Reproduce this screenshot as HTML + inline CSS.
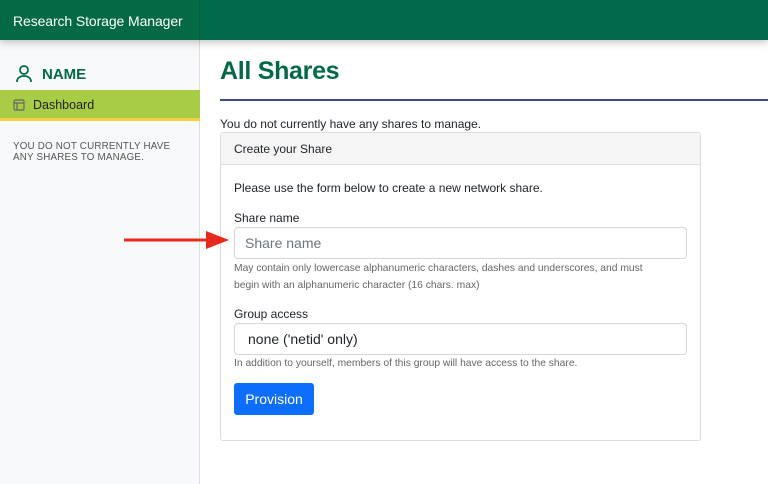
<!DOCTYPE html>
<html><head><meta charset="utf-8"><style>
*{box-sizing:border-box;margin:0;padding:0}
body{width:768px;height:484px;overflow:hidden;font-family:"Liberation Sans",sans-serif;background:#fff;position:relative;color:#212529}
.top{position:absolute;left:0;top:0;width:768px;height:40px;background:#00694a;box-shadow:0 2px 8px rgba(0,0,0,.25);z-index:2}
.top .brand{position:absolute;left:0;top:0;width:200px;height:40px;background:#046a46;border-right:1px solid #0b5a3d;color:#fff;font-size:14px;line-height:42px;padding-left:13px;letter-spacing:-.1px}
.side{position:absolute;left:0;top:40px;width:200px;height:444px;background:#f8f9fa;border-right:1px solid #dcdee2}
.name{position:absolute;left:14px;top:24px;color:#046a46;font-weight:bold;font-size:15px;display:flex;align-items:center}
.dash{position:absolute;left:0;top:50px;width:200px;height:31px;background:#a8cc45;border-bottom:3px solid #f4d03f;font-size:12.5px;color:#222;line-height:31px;padding-left:33px}
.dash svg{position:absolute;left:13px;top:9px}
.stext{position:absolute;left:13px;top:101px;font-size:9.8px;color:#555;line-height:11px;letter-spacing:.2px}
h1{position:absolute;left:220px;top:57px;font-size:25px;color:#046a46;font-weight:bold;letter-spacing:-.3px}
.hr{position:absolute;left:220px;top:99px;width:548px;height:2px;background:#3d4a8a}
.p{position:absolute;left:220px;top:117px;font-size:12px}
.card{position:absolute;left:220px;top:132px;width:481px;height:309px;border:1px solid #dcdcdc;border-radius:3px}
.ch{height:32px;background:#f5f5f5;border-bottom:1px solid #e0e0e0;font-size:12px;line-height:32px;padding-left:13px}
.t{position:absolute;left:13px;font-size:12px}
.in{position:absolute;left:13px;width:453px;height:32px;border:1px solid #d3d6da;border-radius:4px;font-size:14px;line-height:30px}
.h{position:absolute;left:13px;font-size:10.3px;color:#666;line-height:17px}
.btn{position:absolute;left:13px;top:250px;width:80px;height:32px;background:#0d6efd;border-radius:3px;color:#fff;font-size:14px;line-height:32px;text-align:center}
</style></head><body>
<div class="top"><div class="brand">Research Storage Manager</div></div>
<div class="side">
<div class="name"><svg width="20" height="20" viewBox="0 0 20 20" fill="none" stroke="#046a46" stroke-width="1.8"><circle cx="10" cy="6" r="4"/><path d="M3 18c0-4 3-6 7-6s7 2 7 6"/></svg><span style="margin-left:8px">NAME</span></div>
<div class="dash"><svg width="12" height="12" viewBox="0 0 12 12" fill="none" stroke="#666" stroke-width="1.2"><rect x="1" y="1" width="10" height="10" rx="1.5"/><path d="M1 4h10M4 4v7"/></svg>Dashboard</div>
<div class="stext">YOU DO NOT CURRENTLY HAVE<br>ANY SHARES TO MANAGE.</div>
</div>
<h1>All Shares</h1>
<div class="hr"></div>
<div class="p">You do not currently have any shares to manage.</div>
<div class="card">
<div class="ch">Create your Share</div>
<div class="t" style="top:48px">Please use the form below to create a new network share.</div>
<div class="t" style="top:78px">Share name</div>
<div class="in" style="top:94px;padding-left:10px;color:#6c757d">Share name</div>
<div class="h" style="top:127px">May contain only lowercase alphanumeric characters, dashes and underscores, and must<br>begin with an alphanumeric character (16 chars. max)</div>
<div class="t" style="top:174px">Group access</div>
<div class="in" style="top:190px;padding-left:13px">none ('netid' only)</div>
<div class="h" style="top:222px">In addition to yourself, members of this group will have access to the share.</div>
<div class="btn">Provision</div>
</div>
<svg style="position:absolute;left:122px;top:229px" width="110" height="22"><path d="M2 11H88" stroke="#e8291c" stroke-width="3"/><path d="M84 2L107 11L84 20Z" fill="#e8291c"/></svg>
</body></html>
